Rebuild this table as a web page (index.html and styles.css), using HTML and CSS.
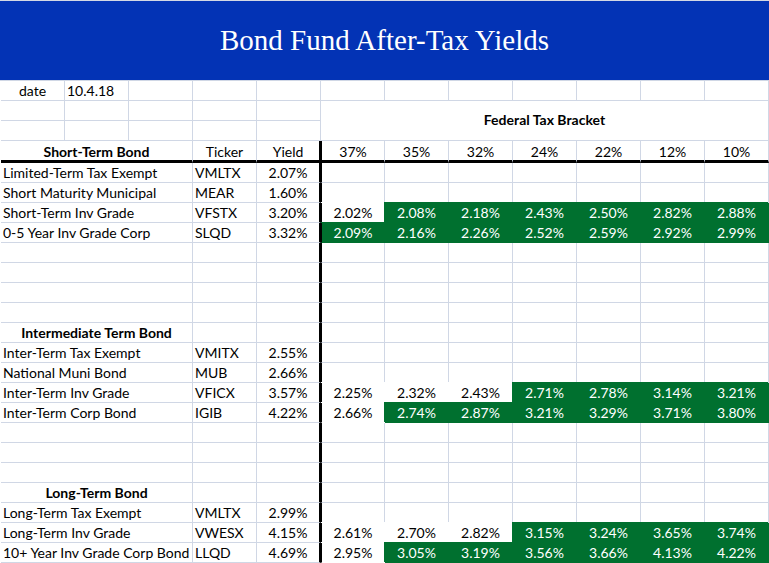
FILE: index.html
```html
<!DOCTYPE html>
<html>
<head>
<meta charset="utf-8">
<title>Bond Fund After-Tax Yields</title>
<link rel="stylesheet" href="styles.css">
</head>
<body>
<header class="band"><h1 class="title">Bond Fund After-Tax Yields</h1></header>
<main class="sheet">
  <div class="row">
    <div class="cell">date</div><div class="cell left">10.4.18</div><div class="cell"></div><div class="cell"></div><div class="cell"></div>
    <div class="cell"></div><div class="cell"></div><div class="cell"></div><div class="cell"></div><div class="cell"></div><div class="cell"></div><div class="cell"></div>
  </div>
  <div class="block">
    <div class="stack">
      <div class="row"><div class="cell"></div><div class="cell"></div><div class="cell"></div><div class="cell"></div><div class="cell"></div></div>
      <div class="row"><div class="cell"></div><div class="cell"></div><div class="cell"></div><div class="cell"></div><div class="cell"></div></div>
    </div>
    <div class="cell merged bold">Federal Tax Bracket</div>
  </div>
  <div class="row head">
    <div class="cell w3 bold">Short-Term Bond</div><div class="cell">Ticker</div><div class="cell divl">Yield</div>
    <div class="cell divr">37%</div><div class="cell">35%</div><div class="cell">32%</div><div class="cell">24%</div><div class="cell">22%</div><div class="cell">12%</div><div class="cell">10%</div>
  </div>

  <div class="row">
    <div class="cell w3 left">Limited-Term Tax Exempt</div><div class="cell left">VMLTX</div><div class="cell divl">2.07%</div>
    <div class="cell divr"></div><div class="cell"></div><div class="cell"></div><div class="cell"></div><div class="cell"></div><div class="cell"></div><div class="cell"></div>
  </div>
  <div class="row">
    <div class="cell w3 left">Short Maturity Municipal</div><div class="cell left">MEAR</div><div class="cell divl">1.60%</div>
    <div class="cell divr"></div><div class="cell"></div><div class="cell"></div><div class="cell"></div><div class="cell"></div><div class="cell"></div><div class="cell"></div>
  </div>
  <div class="row">
    <div class="cell w3 left">Short-Term Inv Grade</div><div class="cell left">VFSTX</div><div class="cell divl">3.20%</div>
    <div class="cell divr w">2.02%</div><div class="cell g">2.08%</div><div class="cell g">2.18%</div><div class="cell g">2.43%</div><div class="cell g">2.50%</div><div class="cell g">2.82%</div><div class="cell g">2.88%</div>
  </div>
  <div class="row">
    <div class="cell w3 left">0-5 Year Inv Grade Corp</div><div class="cell left">SLQD</div><div class="cell divl">3.32%</div>
    <div class="cell divr g">2.09%</div><div class="cell g">2.16%</div><div class="cell g">2.26%</div><div class="cell g">2.52%</div><div class="cell g">2.59%</div><div class="cell g">2.92%</div><div class="cell g">2.99%</div>
  </div>
  <div class="row">
    <div class="cell w3"></div><div class="cell"></div><div class="cell divl"></div>
    <div class="cell divr"></div><div class="cell"></div><div class="cell"></div><div class="cell"></div><div class="cell"></div><div class="cell"></div><div class="cell"></div>
  </div>
  <div class="row">
    <div class="cell w3"></div><div class="cell"></div><div class="cell divl"></div>
    <div class="cell divr"></div><div class="cell"></div><div class="cell"></div><div class="cell"></div><div class="cell"></div><div class="cell"></div><div class="cell"></div>
  </div>
  <div class="row">
    <div class="cell w3"></div><div class="cell"></div><div class="cell divl"></div>
    <div class="cell divr"></div><div class="cell"></div><div class="cell"></div><div class="cell"></div><div class="cell"></div><div class="cell"></div><div class="cell"></div>
  </div>
  <div class="row">
    <div class="cell w3"></div><div class="cell"></div><div class="cell divl"></div>
    <div class="cell divr"></div><div class="cell"></div><div class="cell"></div><div class="cell"></div><div class="cell"></div><div class="cell"></div><div class="cell"></div>
  </div>

  <div class="row">
    <div class="cell w3 bold">Intermediate Term Bond</div><div class="cell"></div><div class="cell divl"></div>
    <div class="cell divr"></div><div class="cell"></div><div class="cell"></div><div class="cell"></div><div class="cell"></div><div class="cell"></div><div class="cell"></div>
  </div>
  <div class="row">
    <div class="cell w3 left">Inter-Term Tax Exempt</div><div class="cell left">VMITX</div><div class="cell divl">2.55%</div>
    <div class="cell divr"></div><div class="cell"></div><div class="cell"></div><div class="cell"></div><div class="cell"></div><div class="cell"></div><div class="cell"></div>
  </div>
  <div class="row">
    <div class="cell w3 left">National Muni Bond</div><div class="cell left">MUB</div><div class="cell divl">2.66%</div>
    <div class="cell divr"></div><div class="cell"></div><div class="cell"></div><div class="cell"></div><div class="cell"></div><div class="cell"></div><div class="cell"></div>
  </div>
  <div class="row">
    <div class="cell w3 left">Inter-Term Inv Grade</div><div class="cell left">VFICX</div><div class="cell divl">3.57%</div>
    <div class="cell divr w">2.25%</div><div class="cell w">2.32%</div><div class="cell w">2.43%</div><div class="cell g">2.71%</div><div class="cell g">2.78%</div><div class="cell g">3.14%</div><div class="cell g">3.21%</div>
  </div>
  <div class="row">
    <div class="cell w3 left">Inter-Term Corp Bond</div><div class="cell left">IGIB</div><div class="cell divl">4.22%</div>
    <div class="cell divr w">2.66%</div><div class="cell g">2.74%</div><div class="cell g">2.87%</div><div class="cell g">3.21%</div><div class="cell g">3.29%</div><div class="cell g">3.71%</div><div class="cell g">3.80%</div>
  </div>
  <div class="row">
    <div class="cell w3"></div><div class="cell"></div><div class="cell divl"></div>
    <div class="cell divr"></div><div class="cell"></div><div class="cell"></div><div class="cell"></div><div class="cell"></div><div class="cell"></div><div class="cell"></div>
  </div>
  <div class="row">
    <div class="cell w3"></div><div class="cell"></div><div class="cell divl"></div>
    <div class="cell divr"></div><div class="cell"></div><div class="cell"></div><div class="cell"></div><div class="cell"></div><div class="cell"></div><div class="cell"></div>
  </div>
  <div class="row">
    <div class="cell w3"></div><div class="cell"></div><div class="cell divl"></div>
    <div class="cell divr"></div><div class="cell"></div><div class="cell"></div><div class="cell"></div><div class="cell"></div><div class="cell"></div><div class="cell"></div>
  </div>

  <div class="row">
    <div class="cell w3 bold">Long-Term Bond</div><div class="cell"></div><div class="cell divl"></div>
    <div class="cell divr"></div><div class="cell"></div><div class="cell"></div><div class="cell"></div><div class="cell"></div><div class="cell"></div><div class="cell"></div>
  </div>
  <div class="row">
    <div class="cell w3 left">Long-Term Tax Exempt</div><div class="cell left">VMLTX</div><div class="cell divl">2.99%</div>
    <div class="cell divr"></div><div class="cell"></div><div class="cell"></div><div class="cell"></div><div class="cell"></div><div class="cell"></div><div class="cell"></div>
  </div>
  <div class="row">
    <div class="cell w3 left">Long-Term Inv Grade</div><div class="cell left">VWESX</div><div class="cell divl">4.15%</div>
    <div class="cell divr w">2.61%</div><div class="cell w">2.70%</div><div class="cell w">2.82%</div><div class="cell g">3.15%</div><div class="cell g">3.24%</div><div class="cell g">3.65%</div><div class="cell g">3.74%</div>
  </div>
  <div class="row">
    <div class="cell w3 left">10+ Year Inv Grade Corp Bond</div><div class="cell left">LLQD</div><div class="cell divl">4.69%</div>
    <div class="cell divr w">2.95%</div><div class="cell g">3.05%</div><div class="cell g">3.19%</div><div class="cell g">3.56%</div><div class="cell g">3.66%</div><div class="cell g">4.13%</div><div class="cell g">4.22%</div>
  </div>
</main>
</body>
</html>
```
FILE: styles.css
```css
html, body {
  margin: 0;
  padding: 0;
  background: #ffffff;
  overflow: hidden;
}

body {
  font-family: "Lato", "Liberation Sans", sans-serif;
  font-size: 14px;
  color: #000000;
}

.band {
  box-sizing: border-box;
  height: 80px;
  width: 769px;
  border-top: 1px solid #d4d8e4;
  background: #0333b5;
  display: flex;
  align-items: center;
  justify-content: center;
}

.title {
  margin: 0;
  font-family: "Liberation Serif", "Times New Roman", serif;
  font-weight: normal;
  font-size: 29px;
  color: #ffffff;
  line-height: normal;
}

.sheet {
  display: block;
  border-top: 1px solid #d0d7e5;
  padding-left: 1px;
  width: 768px;
}

.row {
  display: flex;
  height: 20px;
}

.block {
  display: flex;
}

.stack {
  display: flex;
  flex-direction: column;
}

.cell {
  flex: none;
  box-sizing: border-box;
  width: 64px;
  height: 100%;
  border-right: 1px solid #d0d7e5;
  border-bottom: 1px solid #d0d7e5;
  padding: 0 2px 2px 2px;
  display: flex;
  align-items: flex-end;
  justify-content: center;
  line-height: 15px;
  white-space: nowrap;
}

.left {
  justify-content: flex-start;
}

.bold {
  font-weight: bold;
}

.w3 {
  width: 192px;
}

.merged {
  width: 448px;
  height: 40px;
  align-items: center;
  padding-bottom: 3px;
}

.head {
  height: 22px;
}

.head .cell {
  border-bottom: 3px solid #000000;
  padding-bottom: 1px;
}

.divl {
  border-right: 2px solid #000000;
}

.divr {
  border-left: 1px solid #000000;
}

.g {
  background: #00702f;
  color: #ffffff;
  border-right-color: #00702f;
  border-bottom-color: #00702f;
  box-shadow: -1px -1px 0 #00702f;
}

.w {
  background: #ffffff;
  border-right-color: #ffffff;
  border-bottom-color: #ffffff;
  box-shadow: -1px -1px 0 #ffffff;
}

.divr.g {
  box-shadow: 0 -1px 0 #00702f;
}

.divr.w {
  box-shadow: 0 -1px 0 #ffffff;
}
```
